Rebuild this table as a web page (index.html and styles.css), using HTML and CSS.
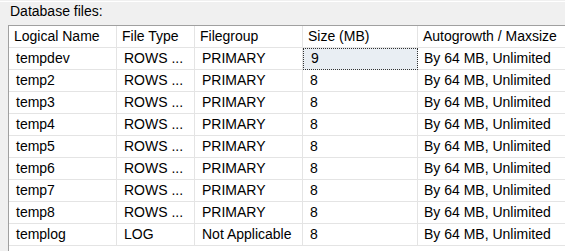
FILE: index.html
```html
<!DOCTYPE html>
<html>
<head>
<meta charset="utf-8">
<link rel="stylesheet" href="styles.css">
</head>
<body>
<div class="panel">
  <div class="label">Database files:</div>
  <div class="grid">
    <div class="row head">
      <div class="c c1">Logical Name</div><div class="c c2">File Type</div><div class="c c3">Filegroup</div><div class="c c4">Size (MB)</div><div class="c c5">Autogrowth / Maxsize</div>
    </div>
    <div class="row">
      <div class="c c1">tempdev</div><div class="c c2">ROWS ...</div><div class="c c3">PRIMARY</div><div class="c c4 sel">9</div><div class="c c5">By 64 MB, Unlimited</div>
    </div>
    <div class="row">
      <div class="c c1">temp2</div><div class="c c2">ROWS ...</div><div class="c c3">PRIMARY</div><div class="c c4">8</div><div class="c c5">By 64 MB, Unlimited</div>
    </div>
    <div class="row">
      <div class="c c1">temp3</div><div class="c c2">ROWS ...</div><div class="c c3">PRIMARY</div><div class="c c4">8</div><div class="c c5">By 64 MB, Unlimited</div>
    </div>
    <div class="row">
      <div class="c c1">temp4</div><div class="c c2">ROWS ...</div><div class="c c3">PRIMARY</div><div class="c c4">8</div><div class="c c5">By 64 MB, Unlimited</div>
    </div>
    <div class="row">
      <div class="c c1">temp5</div><div class="c c2">ROWS ...</div><div class="c c3">PRIMARY</div><div class="c c4">8</div><div class="c c5">By 64 MB, Unlimited</div>
    </div>
    <div class="row">
      <div class="c c1">temp6</div><div class="c c2">ROWS ...</div><div class="c c3">PRIMARY</div><div class="c c4">8</div><div class="c c5">By 64 MB, Unlimited</div>
    </div>
    <div class="row">
      <div class="c c1">temp7</div><div class="c c2">ROWS ...</div><div class="c c3">PRIMARY</div><div class="c c4">8</div><div class="c c5">By 64 MB, Unlimited</div>
    </div>
    <div class="row">
      <div class="c c1">temp8</div><div class="c c2">ROWS ...</div><div class="c c3">PRIMARY</div><div class="c c4">8</div><div class="c c5">By 64 MB, Unlimited</div>
    </div>
    <div class="row">
      <div class="c c1">templog</div><div class="c c2">LOG</div><div class="c c3">Not Applicable</div><div class="c c4">8</div><div class="c c5">By 64 MB, Unlimited</div>
    </div>
  </div>
</div>
</body>
</html>
```
FILE: styles.css
```css
html, body {
  margin: 0;
  padding: 0;
  background: #f0f0f0;
  height: 100%;
  overflow: hidden;
}
body {
  font-family: "Liberation Sans", Arial, sans-serif;
  font-size: 14px;
  color: #000;
}
.panel {
  box-sizing: border-box;
  border-top: 1px solid #fff;
  margin-top: 1px;
  height: calc(100% - 1px);
  display: flex;
  flex-direction: column;
}
.label {
  padding-left: 10px;
  height: 23px;
  line-height: 19px;
  flex-shrink: 0;
}
.grid {
  flex: 1;
  min-height: 0;
  margin-left: 8px;
  background: #fff;
  border-top: 1px solid #a0a0a0;
  border-left: 1px solid #a0a0a0;
  overflow: hidden;
}
.row {
  display: flex;
  height: 22px;
}
.c {
  box-sizing: border-box;
  flex-shrink: 0;
  height: 22px;
  line-height: 21px;
  border-right: 1px solid #e4e4e4;
  border-bottom: 1px solid #e4e4e4;
  white-space: nowrap;
  overflow: hidden;
  padding-left: 7px;
}
.head .c {
  padding-left: 5px;
}
.c1 { width: 108px; }
.c2 { width: 78px; }
.c3 { width: 108px; }
.c4 { width: 115px; }
.c5 { width: 290px; padding-left: 6px; }
.head .c5 { padding-left: 5px; }
.sel {
  background: #e9eef3;
  border: 1px dotted #333;
  line-height: 19px;
}
```
